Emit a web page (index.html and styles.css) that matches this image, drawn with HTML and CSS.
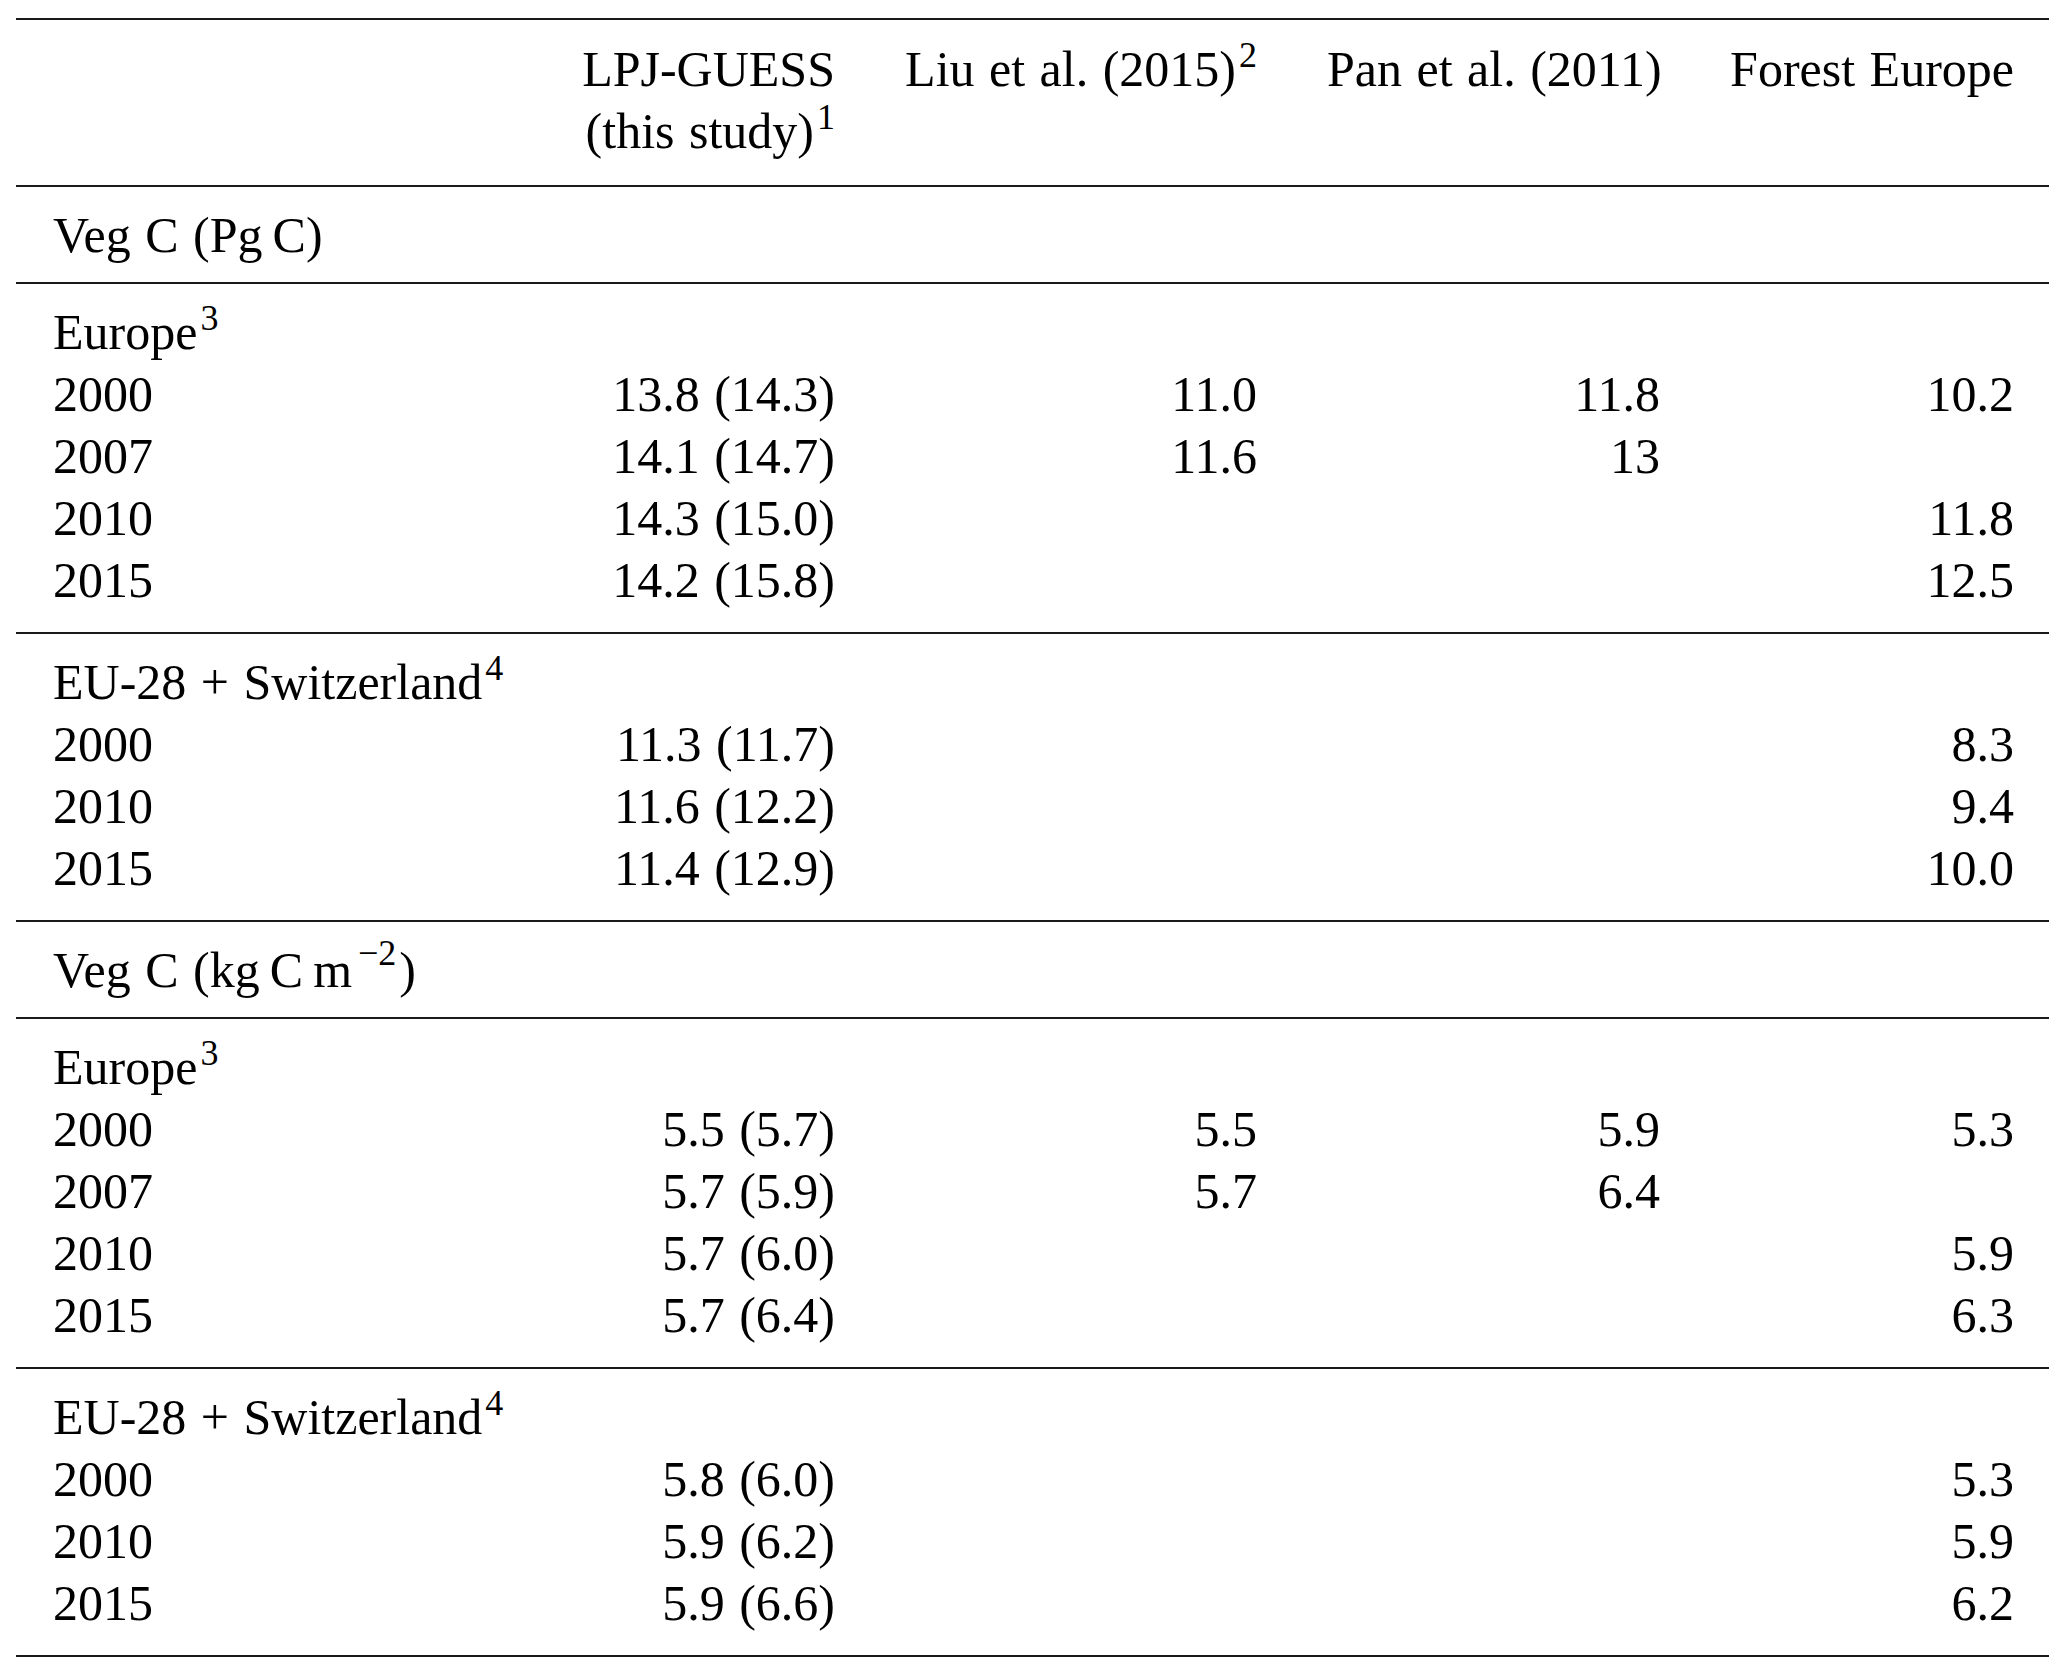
FILE: index.html
```html
<!DOCTYPE html>
<html lang="en">
<head>
<meta charset="utf-8">
<title>Vegetation carbon comparison</title>
<link rel="stylesheet" href="styles.css">
</head>
<body>
<table class="tbl">
  <colgroup>
    <col class="c0"><col class="c1"><col class="c2"><col class="c3"><col class="c4">
  </colgroup>
  <thead>
    <tr>
      <th class="lab"></th>
      <th>LPJ-GUESS<br>(this study)<span class="sup">1</span></th>
      <th>Liu et al. (2015)<span class="sup">2</span></th>
      <th>Pan et al. (2011)</th>
      <th>Forest Europe</th>
    </tr>
  </thead>
  <tbody class="sec">
    <tr><td class="lab">Veg C (Pg&#8201;C)</td><td></td><td></td><td></td><td></td></tr>
  </tbody>
  <tbody class="grp">
    <tr><td class="lab">Europe<span class="sup">3</span></td><td></td><td></td><td></td><td></td></tr>
    <tr><td class="lab">2000</td><td>13.8 (14.3)</td><td>11.0</td><td>11.8</td><td>10.2</td></tr>
    <tr><td class="lab">2007</td><td>14.1 (14.7)</td><td>11.6</td><td>13</td><td></td></tr>
    <tr><td class="lab">2010</td><td>14.3 (15.0)</td><td></td><td></td><td>11.8</td></tr>
    <tr><td class="lab">2015</td><td>14.2 (15.8)</td><td></td><td></td><td>12.5</td></tr>
  </tbody>
  <tbody class="grp">
    <tr><td class="lab">EU-28 + Switzerland<span class="sup">4</span></td><td></td><td></td><td></td><td></td></tr>
    <tr><td class="lab">2000</td><td>11.3 (11.7)</td><td></td><td></td><td>8.3</td></tr>
    <tr><td class="lab">2010</td><td>11.6 (12.2)</td><td></td><td></td><td>9.4</td></tr>
    <tr><td class="lab">2015</td><td>11.4 (12.9)</td><td></td><td></td><td>10.0</td></tr>
  </tbody>
  <tbody class="sec">
    <tr><td class="lab">Veg C (kg&#8201;C&#8201;m<span class="sup sup-neg">&minus;2</span>)</td><td></td><td></td><td></td><td></td></tr>
  </tbody>
  <tbody class="grp">
    <tr><td class="lab">Europe<span class="sup">3</span></td><td></td><td></td><td></td><td></td></tr>
    <tr><td class="lab">2000</td><td>5.5 (5.7)</td><td>5.5</td><td>5.9</td><td>5.3</td></tr>
    <tr><td class="lab">2007</td><td>5.7 (5.9)</td><td>5.7</td><td>6.4</td><td></td></tr>
    <tr><td class="lab">2010</td><td>5.7 (6.0)</td><td></td><td></td><td>5.9</td></tr>
    <tr><td class="lab">2015</td><td>5.7 (6.4)</td><td></td><td></td><td>6.3</td></tr>
  </tbody>
  <tbody class="grp last">
    <tr><td class="lab">EU-28 + Switzerland<span class="sup">4</span></td><td></td><td></td><td></td><td></td></tr>
    <tr><td class="lab">2000</td><td>5.8 (6.0)</td><td></td><td></td><td>5.3</td></tr>
    <tr><td class="lab">2010</td><td>5.9 (6.2)</td><td></td><td></td><td>5.9</td></tr>
    <tr><td class="lab">2015</td><td>5.9 (6.6)</td><td></td><td></td><td>6.2</td></tr>
  </tbody>
</table>
</body>
</html>
```
FILE: styles.css
```css
html, body {
  margin: 0;
  padding: 0;
  background: #ffffff;
}

body {
  font-family: "Liberation Serif", "Times New Roman", serif;
  font-size: 50px;
  color: #000000;
}

.tbl {
  margin: 18px 0 0 16px;
  width: 2033px;
  table-layout: fixed;
  border-collapse: collapse;
  border-top: 2px solid #1a1a1a;
  border-bottom: 2px solid #1a1a1a;
}

.c0 { width: 529px; }
.c1 { width: 325px; }
.c2 { width: 422px; }
.c3 { width: 403px; }
.c4 { width: 354px; }

.tbl th,
.tbl td {
  padding: 0 35px;
  line-height: 62px;
  text-align: right;
  vertical-align: top;
  white-space: nowrap;
  font-weight: normal;
  word-spacing: 2px;
}

.tbl .lab {
  text-align: left;
  padding-left: 37px;
}

.tbl thead th {
  padding-top: 18px;
  padding-bottom: 23px;
}

.tbl tbody {
  border-top: 2px solid #1a1a1a;
}

.sec td {
  padding-top: 17px;
  padding-bottom: 16px;
}

.grp tr:first-child td {
  padding-top: 17px;
}

.grp tr:last-child td {
  padding-bottom: 21px;
}

.sup {
  font-size: 36px;
  line-height: 0;
  vertical-align: 19px;
  margin-left: 3px;
}

.sup-neg {
  margin-left: 6px;
  margin-right: 3px;
  vertical-align: 22px;
}
```
